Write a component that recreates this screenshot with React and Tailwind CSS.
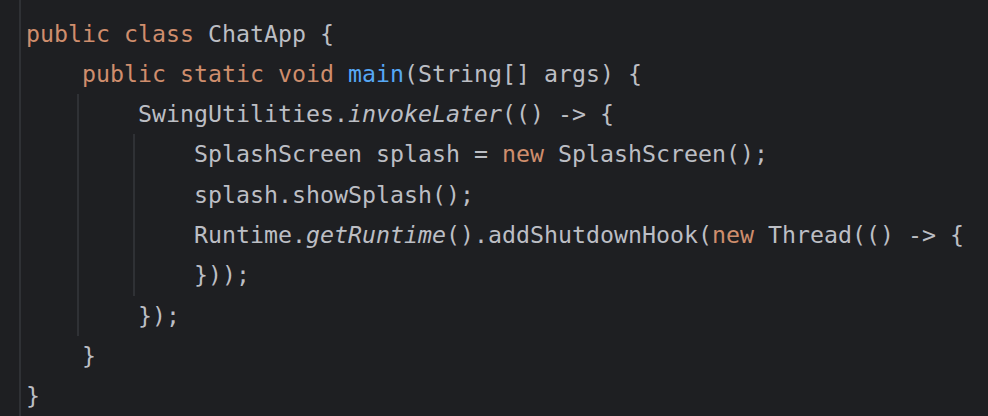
const K = ({ children }) => <span className="text-[#cf8e6d]">{children}</span>;
const I = ({ children }) => <span className="italic">{children}</span>;

const Line = ({ children }) => (
  <div className="h-[40.33px] leading-[40.33px] whitespace-pre">{children}</div>
);

const Guide = ({ left }) => (
  <div className="absolute top-0 bottom-0 w-[2px] bg-[#2f3135]" style={{ left }} />
);

export default function App() {
  return (
    <div className="w-[988px] h-[416px] overflow-hidden bg-[#1e1f22] flex">
      <div className="w-[21px] shrink-0 border-r-2 border-[#2f3135]" />
      <div
        className="pl-[5px] pt-[13.5px] text-[23.25px] text-[#bcbec4]"
        style={{ fontFamily: '"DejaVu Sans Mono", "Liberation Mono", monospace' }}
      >
        <Line>
          <K>public class</K> ChatApp {'{'}
        </Line>
        <Line>
          {'    '}
          <K>public static void</K> <span className="text-[#56a8f5]">main</span>(String[] args) {'{'}
        </Line>
        <div className="relative">
          <Guide left="50.5px" />
          <Line>
            {'        '}SwingUtilities.<I>invokeLater</I>(() -&gt; {'{'}
          </Line>
          <div className="relative">
            <Guide left="106.5px" />
            <Line>
              {'            '}SplashScreen splash = <K>new</K> SplashScreen();
            </Line>
            <Line>{'            '}splash.showSplash();</Line>
            <Line>
              {'            '}Runtime.<I>getRuntime</I>().addShutdownHook(<K>new</K> Thread(() -&gt; {'{'}
            </Line>
            <Line>{'            '}{'}'}));</Line>
          </div>
          <Line>{'        '}{'}'});</Line>
        </div>
        <Line>{'    '}{'}'}</Line>
        <Line>{'}'}</Line>
      </div>
    </div>
  );
}
